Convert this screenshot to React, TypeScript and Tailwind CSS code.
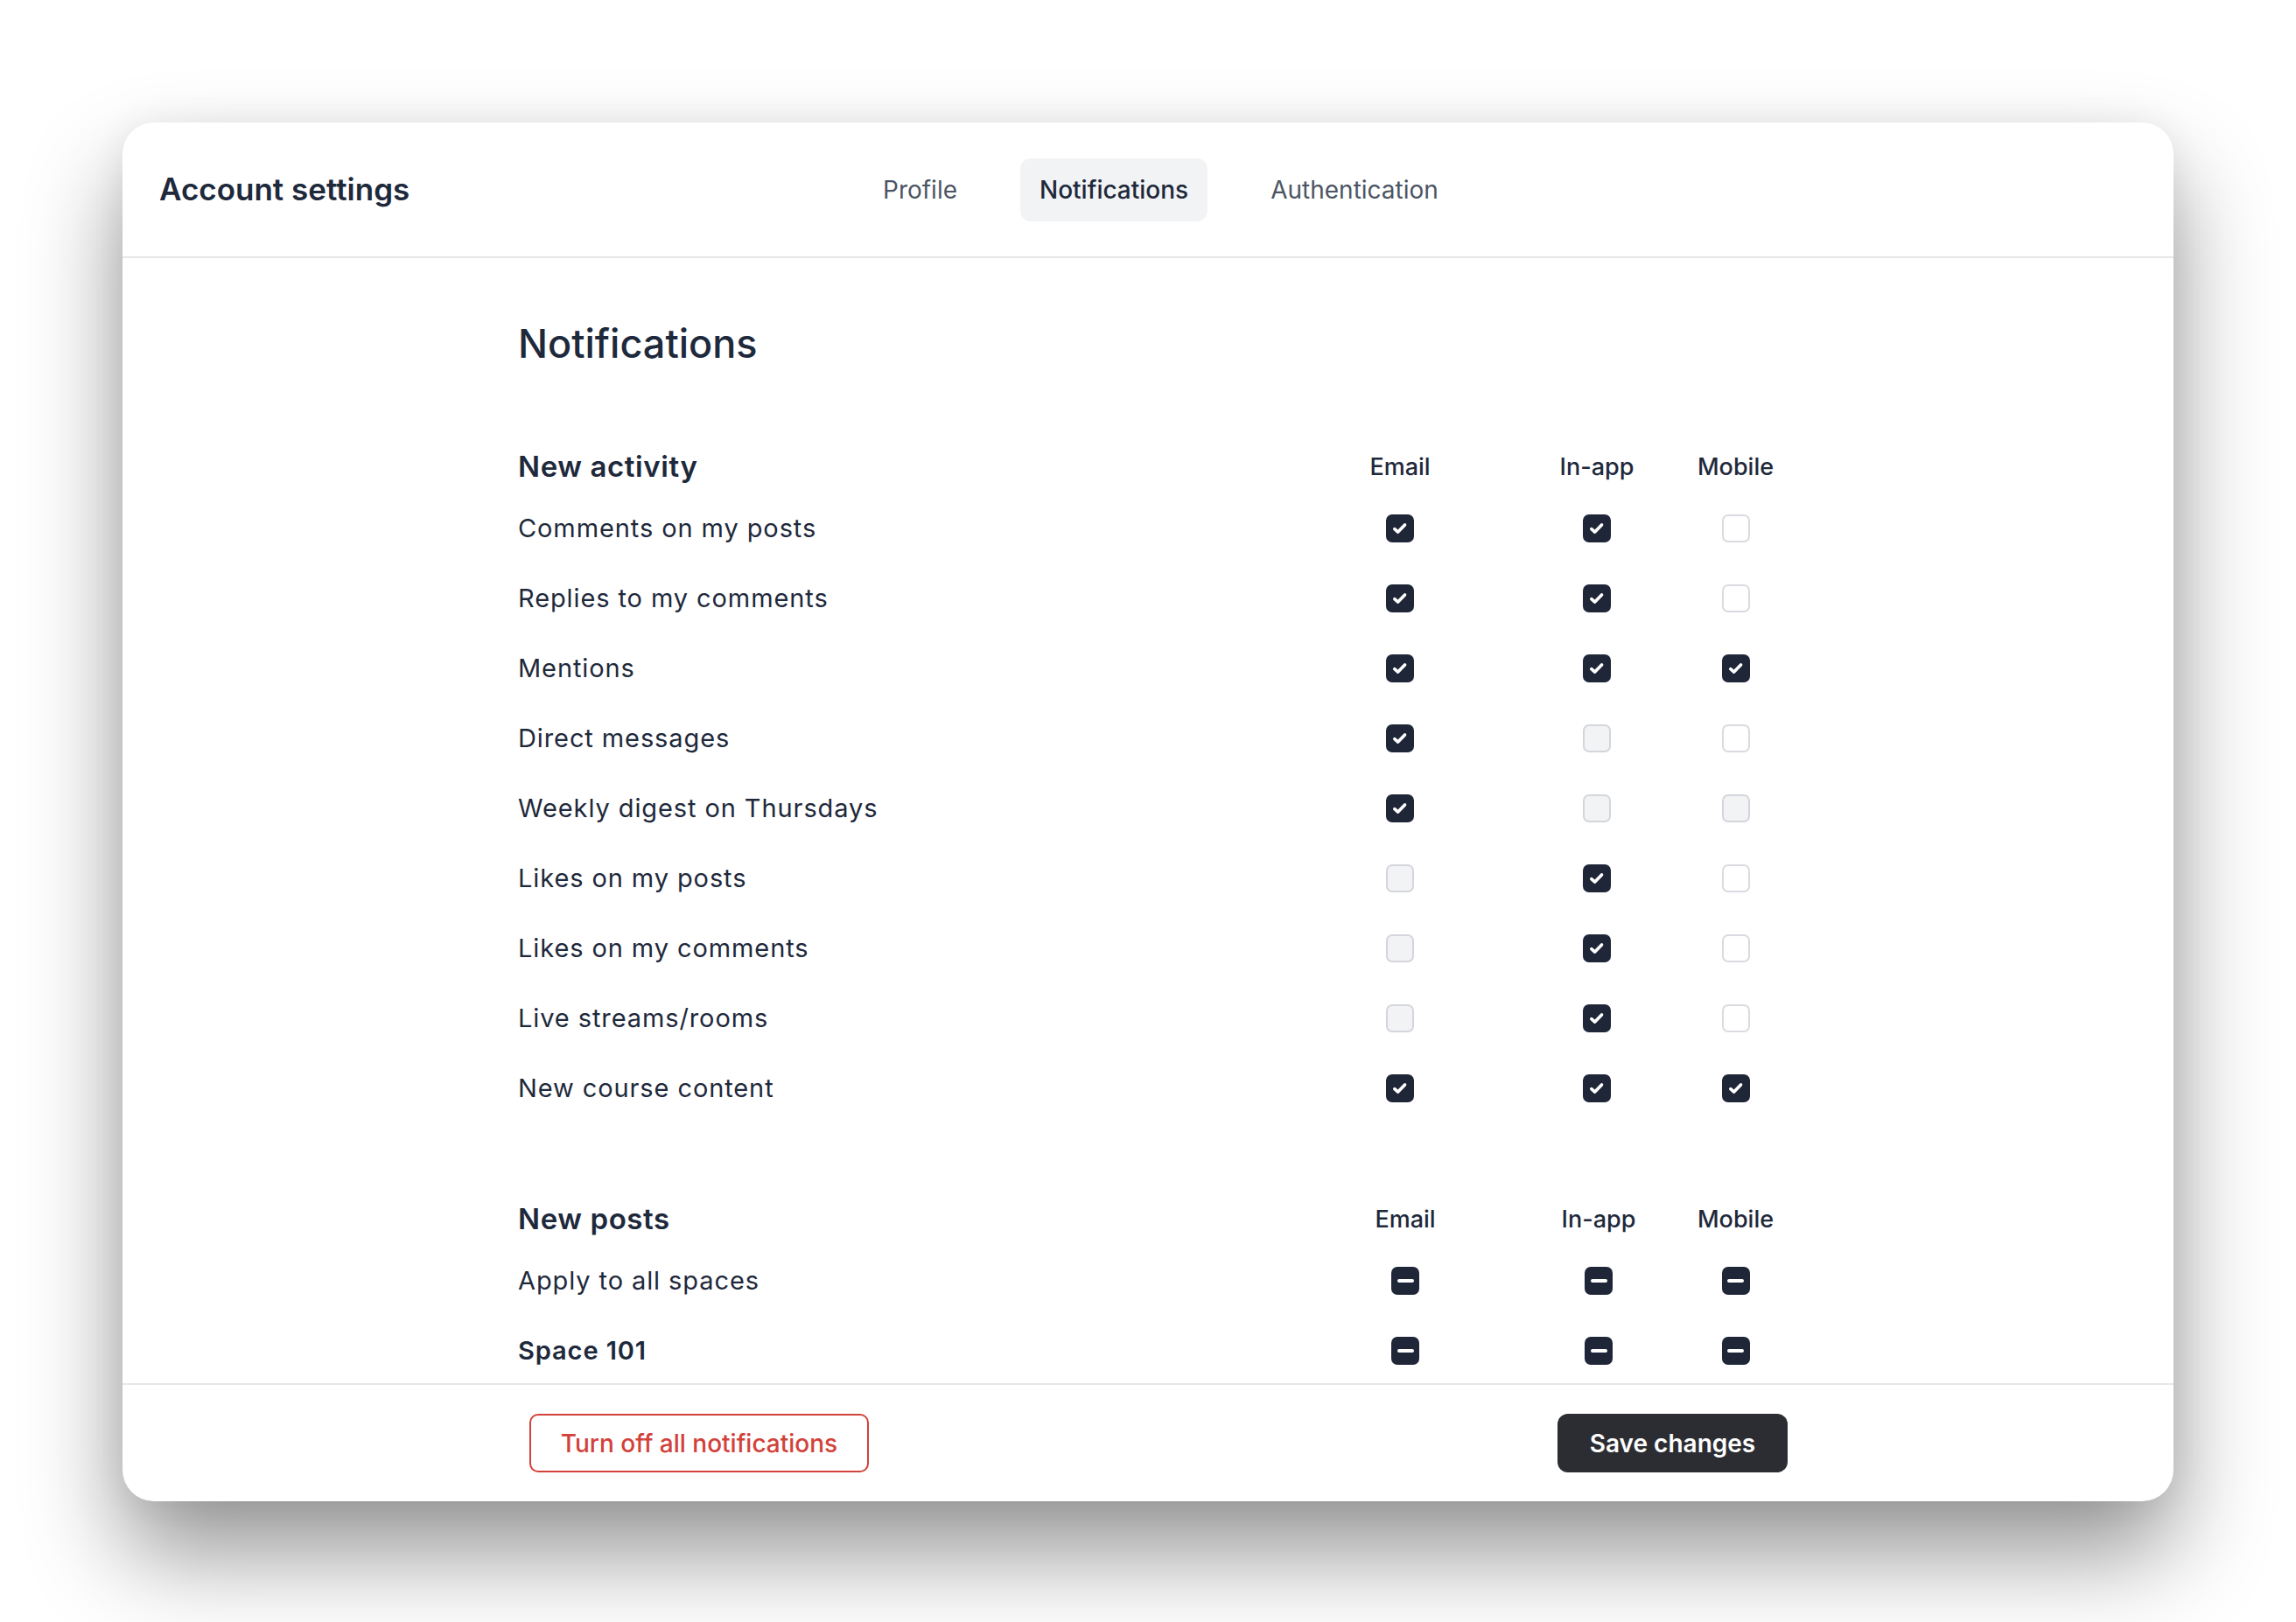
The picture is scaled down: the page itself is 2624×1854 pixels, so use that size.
import { useState } from "react";

type Mark = "on" | "off" | "dis" | "mixed";

const activity: { label: string; marks: Mark[] }[] = [
  { label: "Comments on my posts", marks: ["on", "on", "off"] },
  { label: "Replies to my comments", marks: ["on", "on", "off"] },
  { label: "Mentions", marks: ["on", "on", "on"] },
  { label: "Direct messages", marks: ["on", "dis", "off"] },
  { label: "Weekly digest on Thursdays", marks: ["on", "dis", "dis"] },
  { label: "Likes on my posts", marks: ["dis", "on", "off"] },
  { label: "Likes on my comments", marks: ["dis", "on", "off"] },
  { label: "Live streams/rooms", marks: ["dis", "on", "off"] },
  { label: "New course content", marks: ["on", "on", "on"] },
];

const posts: { label: string; bold?: boolean; marks: Mark[] }[] = [
  { label: "Apply to all spaces", marks: ["mixed", "mixed", "mixed"] },
  { label: "Space 101", bold: true, marks: ["mixed", "mixed", "mixed"] },
];

function Box({ mark }: { mark: Mark }) {
  if (mark === "on") {
    return (
      <span className="flex h-[32px] w-[32px] items-center justify-center rounded-[7px] bg-[#1e2638]">
        <svg width="32" height="32" viewBox="0 0 32 32" fill="none">
          <path d="M9.8 16.6l3.9 3.5 7.8-8.2" stroke="#fff" strokeWidth="3.6" strokeLinecap="round" strokeLinejoin="round" />
        </svg>
      </span>
    );
  }
  if (mark === "mixed") {
    return (
      <span className="flex h-[32px] w-[32px] items-center justify-center rounded-[7px] bg-[#1e2638]">
        <span className="h-[4px] w-[19px] rounded-full bg-white" />
      </span>
    );
  }
  return (
    <span
      className={
        mark === "dis"
          ? "block h-[32px] w-[32px] rounded-[7px] border-2 border-[#d4d6db] bg-[#f2f3f5]"
          : "block h-[32px] w-[32px] rounded-[7px] border-2 border-[#d9dbe0] bg-white"
      }
    />
  );
}

function Section({
  title,
  rows,
  widths,
}: {
  title: string;
  rows: { label: string; bold?: boolean; marks: Mark[] }[];
  widths: string[];
}) {
  return (
    <section>
      <div className="flex h-[60px] items-center">
        <h3 className="flex-1 text-[33px] font-semibold tracking-[0.6px] text-[#1e293b]">{title}</h3>
        {["Email", "In-app", "Mobile"].map((c, i) => (
          <div key={c} className={`${widths[i]} text-center text-[27px] font-medium text-[#1e293b]`}>
            {c}
          </div>
        ))}
      </div>
      {rows.map((r) => (
        <div key={r.label} className="flex h-[80px] items-center">
          <div
            className={`flex-1 text-[29px] tracking-[0.9px] text-[#1e293b] ${r.bold ? "font-semibold" : "font-normal"}`}
          >
            {r.label}
          </div>
          {r.marks.map((m, i) => (
            <div key={i} className={`${widths[i]} flex justify-center`}>
              <Box mark={m} />
            </div>
          ))}
        </div>
      ))}
    </section>
  );
}

export default function App() {
  const [tab, setTab] = useState("Notifications");

  return (
    <main
      className="min-h-screen bg-white pl-[140px] pt-[140px]"
      style={{ fontFamily: "Inter, 'Noto Sans', sans-serif" }}
    >
      <div className="flex h-[1576px] w-[2344px] flex-col overflow-hidden rounded-[36px] bg-white shadow-[0_60px_110px_rgba(0,0,0,0.42),0_0_40px_rgba(0,0,0,0.06)]">
        <header className="flex h-[155px] shrink-0 items-center border-b-2 border-[#e6e6eb] pl-[42px]">
          <h1 className="w-[805px] text-[35px] font-semibold text-[#1e293b]">Account settings</h1>
          <nav className="flex gap-[50px]">
            {["Profile", "Notifications", "Authentication"].map((t) => (
              <button
                key={t}
                type="button"
                onClick={() => setTab(t)}
                className={
                  tab === t
                    ? "h-[72px] rounded-[12px] bg-[#f2f3f5] px-[22px] text-[28px] font-medium text-[#1e293b]"
                    : "h-[72px] rounded-[12px] px-[22px] text-[28px] text-[#4b5563]"
                }
              >
                {t}
              </button>
            ))}
          </nav>
        </header>

        <div className="flex-1 overflow-hidden pl-[452px] pr-[441px] pt-[69px]">
          <h2 className="text-[45px] font-medium leading-[58px] text-[#1e293b]">Notifications</h2>
          <div className="mt-[82px] flex flex-col gap-[80px]">
            <Section title="New activity" rows={activity} widths={["w-[252px]", "w-[198px]", "w-[119px]"]} />
            <Section title="New posts" rows={posts} widths={["w-[248px]", "w-[194px]", "w-[119px]"]} />
          </div>
        </div>

        <footer className="flex h-[135px] shrink-0 items-center justify-between border-t-2 border-[#e6e6eb] pl-[465px] pr-[441px]">
          <button
            type="button"
            className="h-[67px] w-[388px] rounded-[10px] border-2 border-[#d2413a] text-[28px] font-medium text-[#d2413a]"
          >
            Turn off all notifications
          </button>
          <button
            type="button"
            className="h-[67px] w-[263px] rounded-[12px] bg-[#2c2d32] text-[28px] font-semibold text-white"
          >
            Save changes
          </button>
        </footer>
      </div>
    </main>
  );
}
